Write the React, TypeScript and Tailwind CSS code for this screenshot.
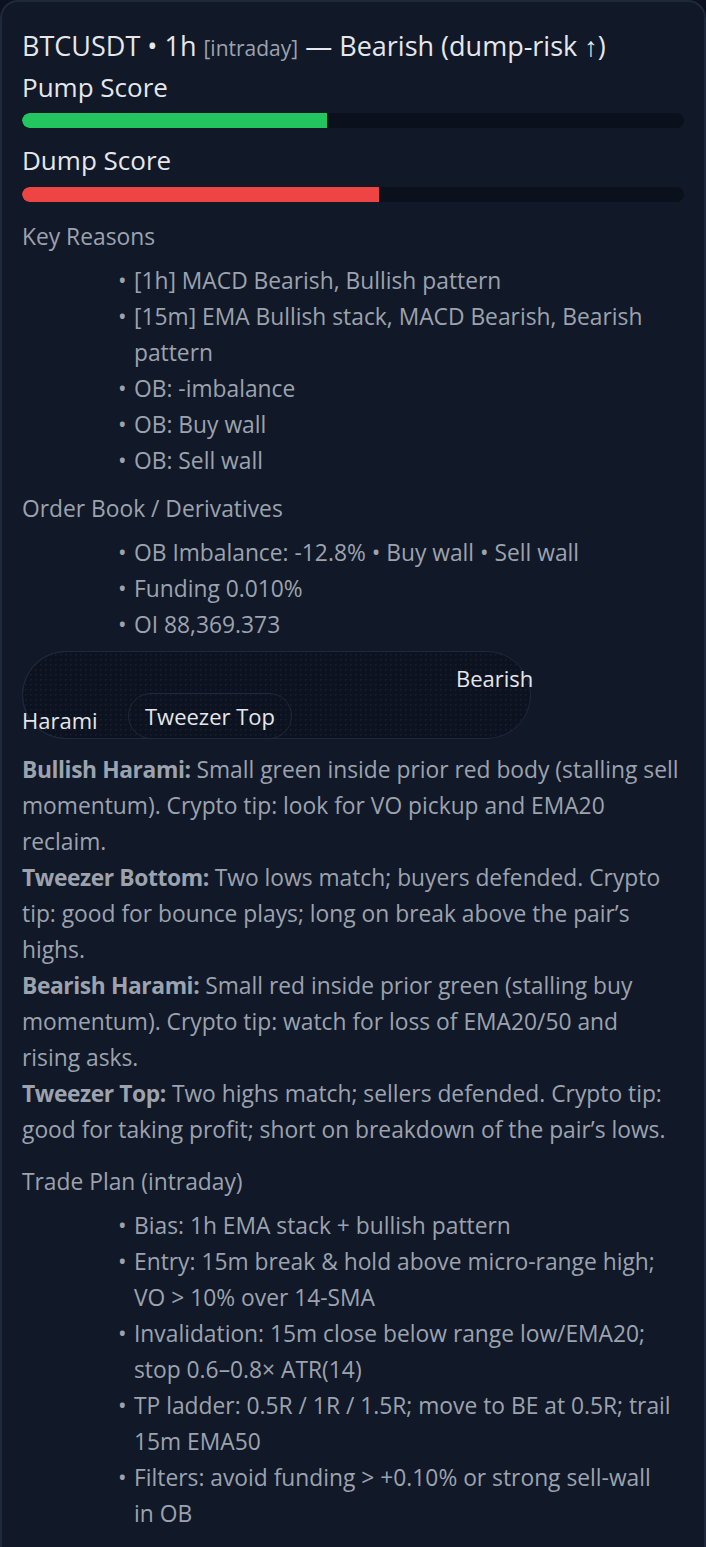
import React from 'react'

const keyReasons = [
  '[1h] MACD Bearish, Bullish pattern',
  '[15m] EMA Bullish stack, MACD Bearish, Bearish pattern',
  'OB: -imbalance',
  'OB: Buy wall',
  'OB: Sell wall',
]

const orderBook = ['OB Imbalance: -12.8% • Buy wall • Sell wall', 'Funding 0.010%', 'OI 88,369.373']

const patterns = [
  { name: 'Bullish Harami:', text: 'Small green inside prior red body (stalling sell momentum). Crypto tip: look for VO pickup and EMA20 reclaim.' },
  { name: 'Tweezer Bottom:', text: 'Two lows match; buyers defended. Crypto tip: good for bounce plays; long on break above the pair’s highs.' },
  { name: 'Bearish Harami:', text: 'Small red inside prior green (stalling buy momentum). Crypto tip: watch for loss of EMA20/50 and rising asks.' },
  { name: 'Tweezer Top:', text: 'Two highs match; sellers defended. Crypto tip: good for taking profit; short on breakdown of the pair’s lows.' },
]

const plan = [
  'Bias: 1h EMA stack + bullish pattern',
  'Entry: 15m break & hold above micro-range high; VO > 10% over 14-SMA',
  'Invalidation: 15m close below range low/EMA20; stop 0.6–0.8× ATR(14)',
  'TP ladder: 0.5R / 1R / 1.5R; move to BE at 0.5R; trail 15m EMA50',
  'Filters: avoid funding > +0.10% or strong sell-wall in OB',
]

function Bullets({ items, extra = '' }: { items: string[]; extra?: string }) {
  return (
    <ul className={`pl-[96px] mt-2 ${extra}`}>
      {items.map((it) => (
        <li key={it} className="flex">
          <span className="w-[16px] shrink-0">•</span>
          <span>{it}</span>
        </li>
      ))}
    </ul>
  )
}

function ScoreBar({ pct, color, gap }: { pct: number; color: string; gap: string }) {
  return (
    <div className={`${gap} h-[15px] w-full rounded-full bg-[#0b111c] overflow-hidden`}>
      <div className={`h-full rounded-l-full ${color}`} style={{ width: `${pct}%` }} />
    </div>
  )
}

export default function App() {
  return (
    <div className="min-h-[1547px] bg-[#0b1120] font-['Open_Sans','Noto_Sans',sans-serif]">
      <div className="rounded-t-[18px] border-2 border-b-0 border-[#1e293b] bg-[#111827] px-[20px] pt-[26px] pb-[16px] text-[22.8px] leading-[36px] text-[#9ca3af] min-h-[1547px]">
        <div className="text-[27px] text-[#e5e7eb]">
          BTCUSDT • 1h <span className="text-[21px] text-[#9ca3af]">[intraday]</span> — Bearish (dump-risk ↑)
        </div>

        <div className="mt-[3px] text-[26px] text-[#e5e7eb]">Pump Score</div>
        <ScoreBar pct={46} color="bg-[#22c55e]" gap="mt-[8px]" />

        <div className="mt-[14px] text-[26px] text-[#e5e7eb]">Dump Score</div>
        <ScoreBar pct={54} color="bg-[#ef4444]" gap="mt-[9px]" />

        <div className="mt-[17px]">Key Reasons</div>
        <Bullets items={keyReasons} />

        <div className="mt-[12px]">Order Book / Derivatives</div>
        <Bullets items={orderBook} />

        <div className="relative mt-[8px] h-[89px] text-[#e5e7eb]">
          <div className="absolute left-0 top-0 h-[88px] w-[509px] rounded-[44px] border border-[#1e293b] bg-[#0c1220] bg-[radial-gradient(#151d2c_1px,transparent_1px)] bg-[size:5px_5px]" />
          <div className="absolute left-0 top-0 h-[88px] w-[60px] rounded-l-[44px] border border-r-0 border-[#1e293b]" />
          <span className="absolute left-[434px] top-[9px] text-[22px]">Bearish</span>
          <span className="absolute left-0 top-[51px] text-[22px]">Harami</span>
          <span className="absolute left-[106px] top-[42px] flex h-[46px] w-[164px] items-center justify-center rounded-full border border-[#1e293b] text-[22px]">
            Tweezer Top
          </span>
        </div>

        <div className="mt-[12px] pr-[3px]">
          {patterns.map((p) => (
            <p key={p.name}>
              <b className="font-bold tracking-[-0.4px]">{p.name}</b> {p.text}
            </p>
          ))}
        </div>

        <div className="mt-[16px]">Trade Plan (intraday)</div>
        <Bullets items={plan} extra="pr-[11px]" />
      </div>
    </div>
  )
}
